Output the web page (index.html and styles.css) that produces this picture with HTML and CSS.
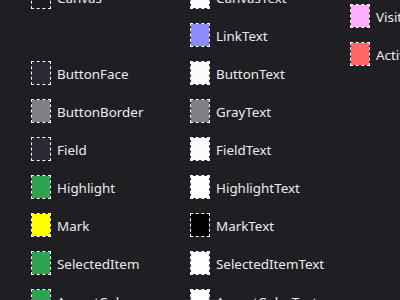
FILE: index.html
```html
<!DOCTYPE html>
<html>
<head>
<meta charset="utf-8">
<link rel="stylesheet" href="styles.css">
</head>
<body>
<div class="board">
  <div class="col">
    <div class="item"><span class="sw c-canvas"></span><span class="lbl">Canvas</span></div>
    <div class="item empty"></div>
    <div class="item"><span class="sw c-btnface"></span><span class="lbl">ButtonFace</span></div>
    <div class="item"><span class="sw c-gray"></span><span class="lbl">ButtonBorder</span></div>
    <div class="item"><span class="sw c-btnface"></span><span class="lbl">Field</span></div>
    <div class="item"><span class="sw c-green"></span><span class="lbl">Highlight</span></div>
    <div class="item"><span class="sw c-mark"></span><span class="lbl">Mark</span></div>
    <div class="item"><span class="sw c-green"></span><span class="lbl">SelectedItem</span></div>
    <div class="item"><span class="sw c-green"></span><span class="lbl">AccentColor</span></div>
  </div>
  <div class="col col2">
    <div class="item"><span class="sw c-white"></span><span class="lbl">CanvasText</span></div>
    <div class="item"><span class="sw c-link"></span><span class="lbl">LinkText</span></div>
    <div class="item"><span class="sw c-white"></span><span class="lbl">ButtonText</span></div>
    <div class="item"><span class="sw c-gray"></span><span class="lbl">GrayText</span></div>
    <div class="item"><span class="sw c-white"></span><span class="lbl">FieldText</span></div>
    <div class="item"><span class="sw c-pure"></span><span class="lbl">HighlightText</span></div>
    <div class="item"><span class="sw c-black"></span><span class="lbl">MarkText</span></div>
    <div class="item"><span class="sw c-pure"></span><span class="lbl">SelectedItemText</span></div>
    <div class="item"><span class="sw c-pure"></span><span class="lbl">AccentColorText</span></div>
  </div>
  <div class="col col3">
    <div class="item"><span class="sw c-visited"></span><span class="lbl">VisitedText</span></div>
    <div class="item"><span class="sw c-active"></span><span class="lbl">ActiveText</span></div>
  </div>
</div>
</body>
</html>
```
FILE: styles.css
```css
html, body {
  margin: 0;
  padding: 0;
  background: #1f1f23;
  overflow: hidden;
}
body {
  width: 400px;
  height: 300px;
  font-family: "Noto Sans", "Open Sans", sans-serif;
  font-size: 13.4px;
  color: #ebebef;
}
.board {
  display: flex;
  margin-top: -15px;
  padding-left: 31px;
}
.col {
  display: flex;
  flex-direction: column;
  gap: 14px;
  width: 159px;
  flex: none;
}
.col2 {
  width: 160px;
}
.col3 {
  padding-top: 19px;
}
.item {
  display: flex;
  align-items: center;
  gap: 6px;
  height: 24px;
  white-space: nowrap;
}
.lbl {
  padding-top: 2px;
}
.sw {
  box-sizing: border-box;
  width: 20px;
  height: 24px;
  border: 1px dashed #ffffff;
  background-clip: padding-box;
  flex: none;
}
.c-canvas { background-color: #1c1b22; }
.c-btnface { background-color: #2b2a33; }
.c-gray { background-color: #808085; }
.c-green { background-color: #2ea44f; }
.c-mark { background-color: #ffff00; }
.c-white { background-color: #fbfbfe; }
.c-pure { background-color: #ffffff; }
.c-black { background-color: #000000; }
.c-link { background-color: #8c8cff; }
.c-visited { background-color: #ffadff; }
.c-active { background-color: #ff6666; }
```
